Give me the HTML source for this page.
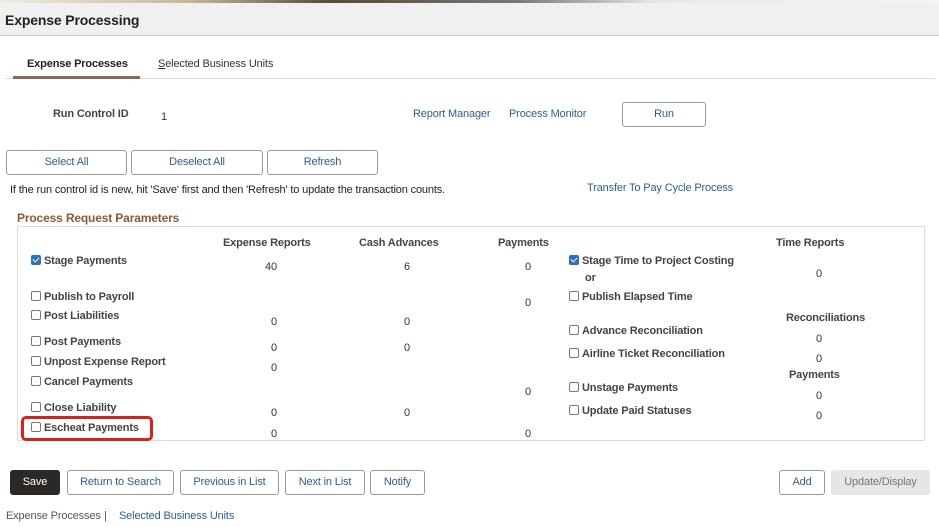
<!DOCTYPE html>
<html><head><style>
body{margin:0;width:939px;height:527px;background:#fff;font-family:"Liberation Sans",Arial,sans-serif;font-size:11px;color:#333;position:relative;overflow:hidden}
.a{position:absolute;line-height:14px;white-space:nowrap;letter-spacing:-0.15px;margin-top:1px}
.b{font-weight:bold;color:#444}
.l{color:#2d5e8e}
.c{text-align:center;width:40px}
.btn{position:absolute;border:1px solid #999;border-radius:3px;background:#fff;color:#2d5e8e;font-size:11px;text-align:center;box-sizing:border-box;letter-spacing:-0.15px}
.cb{display:inline-block;width:8px;height:8px;border:1px solid #777;border-radius:2px;margin-right:3px;vertical-align:-1px;background:#fff}
.ck{background:#2a6fc9;border-color:#2a6fc9;position:relative}
.ck:after{content:"";position:absolute;left:2px;top:0;width:3px;height:5px;border:solid #fff;border-width:0 1.5px 1.5px 0;transform:rotate(45deg)}
</style></head><body>
<div style="position:absolute;left:0;top:0;width:939px;height:3px;background:linear-gradient(90deg,#f0ece4,#c8b898 20%,#5a4a35 35%,#777 55%,#e8e8e8 70%,#f4f4f4)"></div>
<div style="position:absolute;left:0;top:3px;width:939px;height:32px;background:#f0f0f0;border-bottom:1px solid #ccc"></div>
<div class="a" style="left:5px;top:11px;font-size:14px;font-weight:bold;color:#222;line-height:17px">Expense Processing</div>
<div style="position:absolute;left:5px;top:78px;width:930px;height:1px;background:#ddd"></div>
<div style="position:absolute;left:13px;top:76px;width:127px;height:3px;background:#8a6a55"></div>
<div class="a b" style="left:27px;top:56px;color:#222">Expense Processes</div>
<div class="a" style="left:158px;top:56px"><u>S</u>elected Business Units</div>
<div class="a b" style="left:53px;top:106px">Run Control ID</div>
<div class="a" style="left:161px;top:109px">1</div>
<div class="a l" style="left:413px;top:106px">Report Manager</div>
<div class="a l" style="left:509px;top:106px">Process Monitor</div>
<div class="btn" style="left:622px;top:102px;width:84px;height:25px;line-height:23px">Run</div>
<div class="btn" style="left:6px;top:150px;width:121px;height:25px;line-height:23px">Select All</div>
<div class="btn" style="left:131px;top:150px;width:132px;height:25px;line-height:23px">Deselect All</div>
<div class="btn" style="left:267px;top:150px;width:111px;height:25px;line-height:23px">Refresh</div>
<div class="a" style="left:10px;top:182px;color:#222">If the run control id is new, hit 'Save' first and then 'Refresh' to update the transaction counts.</div>
<div class="a l" style="left:587px;top:180px">Transfer To Pay Cycle Process</div>
<div class="a" style="left:17px;top:210px;font-size:12px;font-weight:bold;color:#8a5a35">Process Request Parameters</div>
<div style="position:absolute;left:17px;top:226px;width:908px;height:215px;border:1px solid #ddd;box-sizing:border-box"></div>
<div class="a b" style="left:223px;top:235px">Expense Reports</div>
<div class="a b" style="left:359px;top:235px">Cash Advances</div>
<div class="a b" style="left:498px;top:235px">Payments</div>
<div class="a b" style="left:776px;top:235px">Time Reports</div>
<div class="a b" style="left:31px;top:253px"><span class="cb ck"></span>Stage Payments</div>
<div class="a b" style="left:31px;top:289px"><span class="cb"></span>Publish to Payroll</div>
<div class="a b" style="left:31px;top:308px"><span class="cb"></span>Post Liabilities</div>
<div class="a b" style="left:31px;top:334px"><span class="cb"></span>Post Payments</div>
<div class="a b" style="left:31px;top:354px"><span class="cb"></span>Unpost Expense Report</div>
<div class="a b" style="left:31px;top:374px"><span class="cb"></span>Cancel Payments</div>
<div class="a b" style="left:31px;top:400px"><span class="cb"></span>Close Liability</div>
<div class="a b" style="left:31px;top:420px"><span class="cb"></span>Escheat Payments</div>
<div style="position:absolute;left:21px;top:416px;width:132px;height:25px;border:3px solid #d9201d;border-radius:5px;box-sizing:border-box"></div>
<div class="a c" style="left:251px;top:259px">40</div>
<div class="a c" style="left:387px;top:259px">6</div>
<div class="a c" style="left:508px;top:259px">0</div>
<div class="a c" style="left:508px;top:295px">0</div>
<div class="a c" style="left:254px;top:314px">0</div><div class="a c" style="left:387px;top:314px">0</div>
<div class="a c" style="left:254px;top:340px">0</div><div class="a c" style="left:387px;top:340px">0</div>
<div class="a c" style="left:254px;top:360px">0</div>
<div class="a c" style="left:508px;top:384px">0</div>
<div class="a c" style="left:254px;top:405px">0</div><div class="a c" style="left:387px;top:405px">0</div>
<div class="a c" style="left:254px;top:426px">0</div><div class="a c" style="left:508px;top:426px">0</div>
<div class="a b" style="left:569px;top:253px"><span class="cb ck"></span>Stage Time to Project Costing</div>
<div class="a b" style="left:585px;top:270px">or</div>
<div class="a b" style="left:569px;top:289px"><span class="cb"></span>Publish Elapsed Time</div>
<div class="a b" style="left:569px;top:323px"><span class="cb"></span>Advance Reconciliation</div>
<div class="a b" style="left:569px;top:346px"><span class="cb"></span>Airline Ticket Reconciliation</div>
<div class="a b" style="left:569px;top:380px"><span class="cb"></span>Unstage Payments</div>
<div class="a b" style="left:569px;top:403px"><span class="cb"></span>Update Paid Statuses</div>
<div class="a c" style="left:799px;top:266px">0</div>
<div class="a b" style="left:786px;top:310px">Reconciliations</div>
<div class="a c" style="left:799px;top:331px">0</div>
<div class="a c" style="left:799px;top:351px">0</div>
<div class="a b" style="left:789px;top:367px">Payments</div>
<div class="a c" style="left:799px;top:388px">0</div>
<div class="a c" style="left:799px;top:408px">0</div>
<div class="btn" style="left:10px;top:470px;width:50px;height:25px;line-height:23px;background:#2b2826;border-color:#2b2826;color:#fff">Save</div>
<div class="btn" style="left:67px;top:470px;width:107px;height:25px;line-height:23px">Return to Search</div>
<div class="btn" style="left:180px;top:470px;width:99px;height:25px;line-height:23px">Previous in List</div>
<div class="btn" style="left:285px;top:470px;width:80px;height:25px;line-height:23px">Next in List</div>
<div class="btn" style="left:370px;top:470px;width:55px;height:25px;line-height:23px">Notify</div>
<div class="btn" style="left:779px;top:470px;width:46px;height:25px;line-height:23px">Add</div>
<div class="btn" style="left:831px;top:470px;width:99px;height:25px;line-height:23px;background:#e6e6e6;border-color:#e6e6e6;color:#777">Update/Display</div>
<div class="a" style="left:6px;top:508px;color:#555">Expense Processes</div>
<div class="a" style="left:104px;top:508px;color:#555">|</div>
<div class="a l" style="left:119px;top:508px">Selected Business Units</div>
</body></html>
